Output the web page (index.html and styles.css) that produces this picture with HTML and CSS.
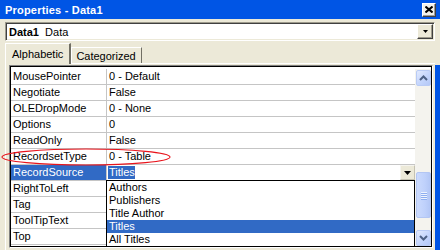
FILE: index.html
```html
<!DOCTYPE html>
<html>
<head>
<meta charset="utf-8">
<link rel="stylesheet" href="styles.css">
</head>
<body>
<div class="win">
  <div class="titlebar">
    <span class="title">Properties - Data1</span>
    <span class="closebtn"><svg width="8" height="7" viewBox="0 0 8 7"><path d="M0.5 0.5 L7.5 6.5 M7.5 0.5 L0.5 6.5" stroke="#000" stroke-width="2" fill="none"/></svg></span>
  </div>
  <div class="objcombo">
    <span class="objtext"><b>Data1</b>&nbsp; Data</span>
    <span class="ddbtn"><svg width="5" height="3" viewBox="0 0 5 3"><path d="M0 0 H5 L2.5 3 Z" fill="#000"/></svg></span>
  </div>
  <div class="tabs">
    <div class="tab active">Alphabetic</div>
    <div class="tab">Categorized</div>
  </div>
  <div class="lower">
    <div class="tabpage">
      <div class="grid">
        <div class="gridin">
          <div class="rows">
            <div class="row"><div class="name">MousePointer</div><div class="val">0 - Default</div></div>
            <div class="row"><div class="name">Negotiate</div><div class="val">False</div></div>
            <div class="row"><div class="name">OLEDropMode</div><div class="val">0 - None</div></div>
            <div class="row"><div class="name">Options</div><div class="val">0</div></div>
            <div class="row"><div class="name">ReadOnly</div><div class="val">False</div></div>
            <div class="row"><div class="name">RecordsetType</div><div class="val">0 - Table</div></div>
            <div class="row"><div class="name sel">RecordSource</div><div class="val edit"><span class="seltext">Titles</span><span class="cellbtn"><svg width="7" height="4" viewBox="0 0 7 4"><path d="M0 0 H7 L3.5 4 Z" fill="#000"/></svg></span></div></div>
            <div class="row"><div class="name">RightToLeft</div><div class="val"></div></div>
            <div class="row"><div class="name">Tag</div><div class="val"></div></div>
            <div class="row"><div class="name">ToolTipText</div><div class="val"></div></div>
            <div class="row"><div class="name">Top</div><div class="val"></div></div>
          </div>
          <div class="vscroll">
            <div class="sbtn up"><svg width="9" height="6" viewBox="0 0 9 6"><path d="M1 5 L4.5 1.5 L8 5" stroke="#4d6185" stroke-width="2" fill="none"/></svg></div>
            <div class="thumb"><span class="grip"></span><span class="grip"></span><span class="grip"></span><span class="grip"></span></div>
            <div class="sbtn down"><svg width="9" height="6" viewBox="0 0 9 6"><path d="M1 1 L4.5 4.5 L8 1" stroke="#4d6185" stroke-width="2" fill="none"/></svg></div>
          </div>
        </div>
      </div>
    </div>
    <div class="edge"></div>
  </div>
  <svg class="ring" width="174" height="24" viewBox="0 0 174 24"><ellipse cx="86" cy="12" rx="84" ry="8" fill="none" stroke="#e8141c" stroke-width="1.1"/></svg>
  <div class="droplist">
    <div class="item">Authors</div>
    <div class="item">Publishers</div>
    <div class="item">Title Author</div>
    <div class="item hl">Titles</div>
    <div class="item">All Titles</div>
  </div>
</div>
</body>
</html>
```
FILE: styles.css
```css
* { box-sizing: border-box; }
html, body { margin: 0; padding: 0; }
body { width: 440px; height: 250px; overflow: hidden; background: #ece9d8; }
.win {
  width: 440px; height: 250px; background: #ece9d8;
  font-family: "Liberation Sans", Arial, sans-serif; font-size: 11px; color: #000;
  position: relative; overflow: hidden; display: flex; flex-direction: column;
}
.titlebar {
  height: 19px; flex: none; background: #0055e5;
  display: flex; align-items: center; justify-content: space-between;
  padding: 0 4px 0 5px;
}
.title { color: #fff; font-weight: bold; font-size: 11px; letter-spacing: 0.2px; }
.closebtn {
  width: 14px; height: 14px; background: #f2f1eb;
  border: 1px solid; border-color: #fff #404040 #404040 #fff;
  box-shadow: inset -1px -1px 0 #9d9d9d;
  display: flex; align-items: center; justify-content: center;
}
.objcombo {
  flex: none; margin: 3px 5px 0 5px; height: 19px;
  border: 1px solid; border-color: #9d9a8c #fff #fff #9d9a8c;
  box-shadow: inset 1px 1px 0 #404040, inset -1px -1px 0 #ece9d8;
  background: #fff; display: flex; align-items: center; justify-content: space-between;
  padding: 0 1px 0 3px;
}
.objtext { font-size: 11px; }
.objtext b { font-weight: bold; }
.ddbtn {
  width: 16px; height: 15px; background: #ece9d8;
  border: 1px solid; border-color: #fff #404040 #404040 #fff;
  box-shadow: inset -1px -1px 0 #9d9a8c;
  display: flex; align-items: center; justify-content: center;
}
.tabs { flex: none; display: flex; align-items: flex-end; height: 20px; margin-top: 2px; padding-left: 5px; }
.tab {
  height: 16px; padding: 0 5px 0 4px; background: #ece9d8;
  border: 1px solid; border-bottom: none; border-color: #fff #716f64 #716f64 #fff;
  display: flex; align-items: center;
}
.tab.active { height: 21px; margin-bottom: -1px; padding: 0 6px; position: relative; z-index: 1; border-right-width: 2px; border-right-color: #716f64; }
.lower { flex: 1; display: flex; }
.tabpage { flex: 1; margin-left: 5px; border-top: 1px solid #fff; border-left: 1px solid #fff; padding: 1px 0 0 3px; }
.edge { width: 5px; background: #0055e5; margin-top: 2px; }
.grid { width: 424px; height: 183px; border: 1px solid; border-color: #808080 #fff #fff #808080; }
.gridin { height: 100%; border: 1px solid #000; display: flex; background: #fff; padding-top: 2px; }
.rows { width: 404px; }
.row { display: flex; height: 16px; border-bottom: 1px solid #c5c5c5; }
.name { width: 96px; flex: none; border-right: 1px solid #c5c5c5; padding-left: 2px; line-height: 15px; white-space: nowrap; }
.name.sel { background: #316ac5; color: #fff; }
.val { flex: 1; padding-left: 2px; line-height: 15px; white-space: nowrap; }
.val.edit { display: flex; align-items: center; padding-left: 1px; }
.seltext { background: #316ac5; color: #fff; height: 13px; line-height: 13px; padding-left: 1px; }
.cellbtn {
  margin-left: auto; width: 15px; height: 15px; background: #ece9d8;
  border: 1px solid; border-color: #f5f4ef #c5c2b2 #c5c2b2 #f5f4ef;
  display: flex; align-items: center; justify-content: center;
}
.vscroll { width: 16px; background: #f4f3ee; display: flex; flex-direction: column; padding-left: 1px; }
.sbtn {
  width: 15px; height: 16px; border: 1px solid #b9cbf5; border-radius: 2px;
  background: linear-gradient(135deg, #e2eafe 0%, #c4d5fc 55%, #b4c8f6 100%);
  display: flex; align-items: center; justify-content: center;
}
.sbtn.up { margin-top: 1px; }
.sbtn.down { margin-top: auto; }
.thumb {
  margin-top: 86px; width: 15px; height: 46px; border: 1px solid #b3c6f3; border-radius: 2px;
  background: linear-gradient(90deg, #cbdafd 0%, #bfd1fb 60%, #b3c7f6 100%);
  display: flex; flex-direction: column; align-items: center; justify-content: center; gap: 1px;
}
.grip { display: block; width: 6px; height: 1px; background: #eef3fe; box-shadow: 0 1px 0 #8eaef0; }
.ring { position: absolute; left: 0; top: 145px; }
.droplist {
  position: absolute; left: 106px; top: 180px; width: 309px; height: 67px;
  border: 1px solid #000; background: #fff;
}
.item { height: 13px; line-height: 13px; padding-left: 2px; white-space: nowrap; }
.item.hl { background: #316ac5; color: #fff; }
```
